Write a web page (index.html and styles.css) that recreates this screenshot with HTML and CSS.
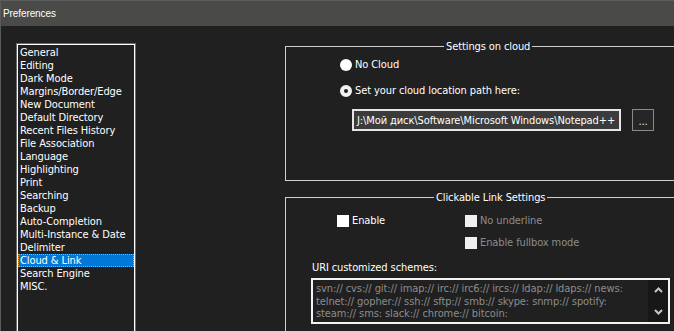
FILE: index.html
```html
<!DOCTYPE html>
<html lang="en">
<head>
  <meta charset="UTF-8" />
  <title>Preferences</title>
  <link rel="stylesheet" href="styles.css">
</head>
<body>
  <div class="window">
    <div class="titlebar">Preferences</div>

    <div class="dialog">
      <ul class="pages">
        <li>General</li>
        <li>Editing</li>
        <li>Dark Mode</li>
        <li>Margins/Border/Edge</li>
        <li>New Document</li>
        <li>Default Directory</li>
        <li>Recent Files History</li>
        <li>File Association</li>
        <li>Language</li>
        <li>Highlighting</li>
        <li>Print</li>
        <li>Searching</li>
        <li>Backup</li>
        <li>Auto-Completion</li>
        <li>Multi-Instance &amp; Date</li>
        <li>Delimiter</li>
        <li class="selected">Cloud &amp; Link</li>
        <li>Search Engine</li>
        <li>MISC.</li>
      </ul>

      <div class="panel">
        <div class="group group-cloud">
          <span class="legend legend-cloud">Settings on cloud</span>
          <div class="option">
            <span class="radio"></span>
            <span>No Cloud</span>
          </div>
          <div class="option">
            <span class="radio radio-ring"></span>
            <span>Set your cloud location path here:</span>
          </div>
          <div class="path-row">
            <div class="path-input">J:\Мой диск\Software\Microsoft Windows\Notepad++</div>
            <div class="browse-btn">...</div>
          </div>
        </div>

        <div class="group group-link">
          <span class="legend legend-link">Clickable Link Settings</span>
          <div class="checks">
            <div class="option">
              <span class="checkbox"></span>
              <span>Enable</span>
            </div>
            <div class="option disabled">
              <span class="checkbox"></span>
              <span>No underline</span>
            </div>
            <div></div>
            <div class="option disabled">
              <span class="checkbox"></span>
              <span>Enable fullbox mode</span>
            </div>
          </div>
          <div class="uri-label">URI customized schemes:</div>
          <div class="uri-box">
            <div class="uri-text">svn:// cvs:// git:// imap:// irc:// irc6:// ircs:// ldap:// ldaps:// news: telnet:// gopher:// ssh:// sftp:// smb:// skype: snmp:// spotify: steam:// sms: slack:// chrome:// bitcoin:</div>
            <div class="scrollbar">
              <svg width="9" height="6" viewBox="0 0 9 6"><path d="M1 5 L4.5 1.5 L8 5" fill="none" stroke="#c8c8c8" stroke-width="2"/></svg>
              <svg width="9" height="6" viewBox="0 0 9 6"><path d="M1 1 L4.5 4.5 L8 1" fill="none" stroke="#c8c8c8" stroke-width="2"/></svg>
            </div>
          </div>
        </div>
      </div>
    </div>
  </div>
</body>
</html>
```

FILE: styles.css
```css
:root {
  --bg: #202020;
  --title-bg: #4a4a48;
  --text: #ffffff;
  --muted: #8c8c8c;
  --frame: #cfcfcf;
  --select: #0078d7;
}
* {
  box-sizing: border-box;
}
body {
  margin: 0;
  width: 674px;
  height: 331px;
  overflow: hidden;
  background: var(--bg);
  color: var(--text);
  font-family: 'DejaVu Sans Condensed', 'DejaVu Sans', sans-serif;
  font-size: 11px;
  line-height: 13px;
  letter-spacing: -0.1px;
}
.window {
  height: 331px;
  border-left: 1px solid #5a5a5a;
}
.titlebar {
  height: 26px;
  background: var(--title-bg);
  border-top: 1px solid #5c5c5c;
  padding: 5px 0 0 2px;
  font-family: 'Liberation Sans', Arial, sans-serif;
  font-size: 10px;
  line-height: 15px;
  letter-spacing: -0.1px;
}
.dialog {
  display: flex;
  align-items: flex-start;
}
.pages {
  flex-shrink: 0;
  list-style: none;
  margin: 17px 0 0 15px;
  padding: 2px 0 0 0;
  width: 120px;
  height: 300px;
  border: 1px solid #6a6a6a;
  box-shadow: inset 0 0 0 1px #ffffff;
}
.pages li {
  height: 13px;
  margin: 0 1px;
  padding-left: 1px;
  white-space: nowrap;
  border: 1px solid transparent;
  line-height: 11px;
}
.pages li.selected {
  background: var(--select);
  border: 1px dotted #f59a23;
}
.panel {
  flex-shrink: 0;
  margin-left: 149px;
  display: flex;
  flex-direction: column;
}
.group {
  position: relative;
  width: 410px;
  border: 1px solid var(--frame);
}
.legend {
  position: absolute;
  top: -7px;
  padding: 0 2px;
  background: var(--bg);
  white-space: nowrap;
}
.group-cloud {
  margin-top: 20px;
  height: 135px;
  padding: 11px 0 0 54px;
}
.legend-cloud {
  left: 158px;
}
.group-link {
  margin-top: 16px;
  height: 160px;
  padding: 16px 0 0 51px;
}
.legend-link {
  left: 148px;
}
.option {
  display: flex;
  align-items: center;
  gap: 3px;
  height: 13px;
  white-space: nowrap;
}
.group-cloud .option + .option {
  margin-top: 13px;
}
.radio {
  width: 12px;
  height: 12px;
  border-radius: 50%;
  background: #ffffff;
}
.radio-ring {
  background: var(--bg);
  border: 4px solid #f2f2f2;
}
.path-row {
  display: flex;
  gap: 11px;
  margin: 12px 0 0 12px;
}
.path-input {
  width: 269px;
  height: 22px;
  padding: 3px 0 0 3px;
  background: #3b3b3b;
  border: 2px solid #e6e6e6;
  white-space: nowrap;
  overflow: hidden;
}
.browse-btn {
  width: 22px;
  height: 22px;
  border: 1px solid #8a8a8a;
  background: #262626;
  text-align: center;
  line-height: 24px;
  color: #e6e6e6;
}
.checks {
  display: grid;
  grid-template-columns: 128px 200px;
  row-gap: 9px;
}
.checkbox {
  width: 12px;
  height: 12px;
  background: #ffffff;
}
.option.disabled {
  color: var(--muted);
}
.option.disabled .checkbox {
  background: #f0f0f0;
}
.uri-label {
  margin: 12px 0 0 -25px;
  height: 13px;
}
.uri-box {
  display: flex;
  width: 359px;
  height: 46px;
  margin: 4px 0 0 -26px;
  border: 2px solid #f2f2f2;
}
.uri-text {
  flex: 1;
  padding: 3px 6px 0 3px;
  color: var(--muted);
  line-height: 12.5px;
}
.scrollbar {
  width: 20px;
  background: #171717;
  display: flex;
  flex-direction: column;
  align-items: center;
  justify-content: space-between;
  padding: 7px 0 7px 0;
}
```
